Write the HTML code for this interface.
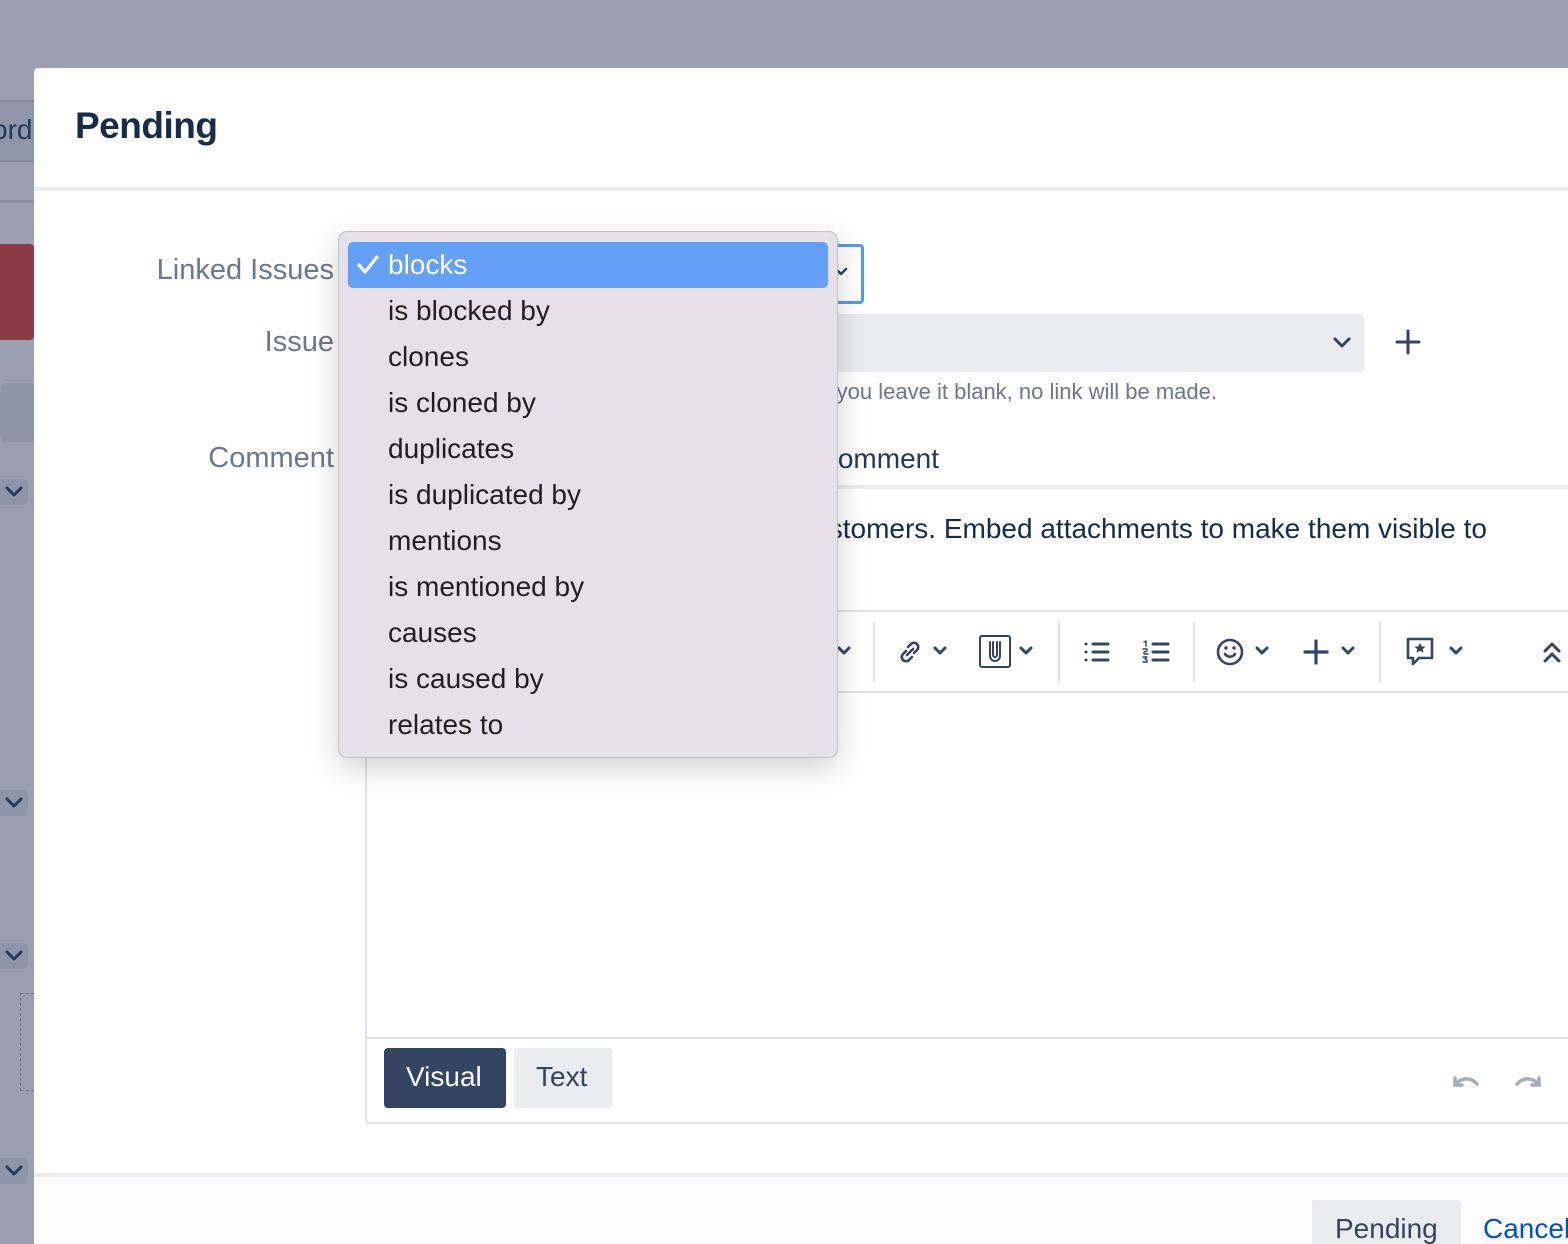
<!DOCTYPE html>
<html><head><meta charset="utf-8"><style>
*{margin:0;padding:0;box-sizing:border-box}
html,body{width:1568px;height:1244px;overflow:hidden}
body{background:#9aa0b1;font-family:"Liberation Sans",sans-serif;position:relative}
.a{position:absolute}
.chev{position:absolute;left:0;width:28px;height:26px;background:#8e95a8;border-radius:0 6px 6px 0}
.t{position:absolute;white-space:nowrap}
.lbl{color:#6b778c;font-size:29px;text-align:right;width:320px;left:14px}
.mi{position:absolute;left:388px;font-size:28px;color:#1f1f1f;white-space:nowrap}
.ic{position:absolute;stroke:#344563;fill:none;stroke-width:2.6;stroke-linecap:round;stroke-linejoin:round}
.sep{position:absolute;top:622px;width:2px;height:60px;background:#dfe1e6}
.cv{position:absolute;left:4px;stroke:#253858;fill:none;stroke-width:3;stroke-linecap:round;stroke-linejoin:round}
</style></head><body>
<div class="a" style="left:0;top:100px;width:34px;height:62px;background:#8f96a9;border-top:2px solid #868da0;border-bottom:2px solid #868da0"></div>
<div class="t" style="left:-8px;top:114px;font-size:28px;color:#253858">ord</div>
<div class="a" style="left:0;top:200px;width:34px;height:3px;background:#8a91a4"></div>
<div class="a" style="left:0;top:244px;width:34px;height:96px;background:#8b3a45;border-radius:0 4px 4px 0"></div>
<div class="a" style="left:0;top:383px;width:34px;height:59px;background:#8e95a8;border-radius:6px 0 0 6px"></div>
<div class="chev" style="top:479px"></div><svg class="cv" style="top:484px" width="20" height="16"><path d="M3 4l7 7 7-7"/></svg>
<div class="chev" style="top:790px"></div><svg class="cv" style="top:795px" width="20" height="16"><path d="M3 4l7 7 7-7"/></svg>
<div class="chev" style="top:943px"></div><svg class="cv" style="top:948px" width="20" height="16"><path d="M3 4l7 7 7-7"/></svg>
<div class="a" style="left:20px;top:993px;width:20px;height:98px;border:1px dashed #6f768a"></div>
<div class="chev" style="top:1158px"></div><svg class="cv" style="top:1163px" width="20" height="16"><path d="M3 4l7 7 7-7"/></svg>

<div class="a" style="left:34px;top:68px;width:1540px;height:1176px;background:#fff;border-radius:4px 0 0 0"></div>
<div class="t" style="left:75px;top:105px;font-size:37px;color:#172b4d;font-weight:bold;letter-spacing:-0.5px">Pending</div>
<div class="a" style="left:34px;top:187px;width:1534px;height:4px;background:#ebecf0"></div>

<div class="t lbl" style="top:254px">Linked Issues</div>
<div class="t lbl" style="top:326px">Issue</div>
<div class="t lbl" style="top:442px">Comment</div>

<div class="a" style="left:780px;top:244px;width:84px;height:60px;border:3px solid #4c9aff;border-radius:4px"></div>
<svg class="ic" style="left:834px;top:266px" width="14" height="12"><path d="M2 3l5 5 5-5"/></svg>
<div class="a" style="left:780px;top:314px;width:584px;height:58px;background:#ebecf0;border-radius:4px"></div>
<svg class="ic" style="left:1332px;top:334px;stroke-width:3" width="20" height="18"><path d="M3 5l7 7 7-7"/></svg>
<svg class="ic" style="left:1394px;top:328px;stroke-width:3" width="28" height="28"><path d="M14 3v22M3 14h22"/></svg>
<div class="t" style="right:351px;top:379px;font-size:22px;color:#6b778c">If you leave it blank, no link will be made.</div>

<div class="t" style="right:629px;top:443px;font-size:28px;color:#253858">Comment</div>
<div class="a" style="left:780px;top:485px;width:788px;height:4px;background:#ebecf0"></div>
<div class="t" style="right:81px;top:513px;font-size:28px;color:#172b4d">Visible to customers. Embed attachments to make them visible to</div>

<div class="a" style="left:365px;top:610px;width:1210px;height:514px;border:2px solid #dfe1e6;border-radius:4px"></div>
<div class="a" style="left:365px;top:691px;width:1210px;height:2px;background:#dfe1e6"></div>
<div class="a" style="left:365px;top:1037px;width:1210px;height:2px;background:#dfe1e6"></div>
<div class="sep" style="left:873px"></div><div class="sep" style="left:1058px"></div><div class="sep" style="left:1193px"></div><div class="sep" style="left:1379px"></div>
<svg class="ic" style="left:836px;top:644px;stroke-width:3" width="16" height="14"><path d="M3 4l5 5 5-5"/></svg>
<svg class="ic" style="left:894px;top:636px" width="32" height="32"><path d="M14 11l3-3a4 4 0 016 6l-3 3M18 21l-3 3a4 4 0 01-6-6l3-3M13 19l6-6"/></svg>
<svg class="ic" style="left:932px;top:644px;stroke-width:3" width="16" height="14"><path d="M3 4l5 5 5-5"/></svg>
<svg class="ic" style="left:978px;top:634px;stroke-width:2" width="36" height="36"><rect x="2" y="2" width="30" height="31" rx="2"/><path d="M12 8v14a5 5 0 0010 0V8M15 8v13a2 2 0 004 0V8"/></svg>
<svg class="ic" style="left:1018px;top:644px;stroke-width:3" width="16" height="14"><path d="M3 4l5 5 5-5"/></svg>
<svg class="ic" style="left:1082px;top:640px;stroke-width:3" width="30" height="26"><path d="M4 4h0M4 12h0M4 20h0M11 4h15M11 12h15M11 20h15"/></svg>
<svg class="ic" style="left:1142px;top:640px;stroke-width:3" width="30" height="26"><path d="M11 4h15M11 12h15M11 20h15"/><path d="M2 2l2-1v5M1 9h4v2l-3 1v2h4M1 17h4l-2 2 2 1v2H1" stroke-width="1.4"/></svg>
<svg class="ic" style="left:1214px;top:636px" width="32" height="32"><circle cx="16" cy="16" r="12"/><path d="M11 18a6 6 0 0010 0"/><path d="M12 12h0M20 12h0" stroke-width="3.5"/></svg>
<svg class="ic" style="left:1254px;top:644px;stroke-width:3" width="16" height="14"><path d="M3 4l5 5 5-5"/></svg>
<svg class="ic" style="left:1302px;top:638px;stroke-width:3.2" width="28" height="28"><path d="M14 3v22M3 14h22"/></svg>
<svg class="ic" style="left:1340px;top:644px;stroke-width:3" width="16" height="14"><path d="M3 4l5 5 5-5"/></svg>
<svg class="ic" style="left:1404px;top:636px" width="32" height="34"><path d="M4 3h24v19H15l-6 6v-6H4z"/><path d="M16 8l1.5 3h3l-2.5 2 1 3-3-2-3 2 1-3-2.5-2h3z" fill="#344563" stroke-width="1"/></svg>
<svg class="ic" style="left:1448px;top:644px;stroke-width:3" width="16" height="14"><path d="M3 4l5 5 5-5"/></svg>
<svg class="ic" style="left:1542px;top:640px;stroke-width:3" width="20" height="26"><path d="M3 11l7-7 7 7M3 21l7-7 7 7"/></svg>

<div class="a" style="left:384px;top:1048px;width:122px;height:60px;background:#344563;border-radius:4px"></div>
<div class="t" style="left:406px;top:1061px;font-size:28px;color:#fff">Visual</div>
<div class="a" style="left:514px;top:1048px;width:98px;height:60px;background:#ebecf0;border-radius:4px"></div>
<div class="t" style="left:536px;top:1061px;font-size:28px;color:#344563">Text</div>
<svg class="ic" style="left:1450px;top:1070px;stroke:#a5adba;stroke-width:3.5" width="34" height="20"><path d="M5 8v7h7"/><path d="M5 15c6-8 16-8 22-1"/></svg>
<svg class="ic" style="left:1510px;top:1070px;stroke:#a5adba;stroke-width:3.5" width="34" height="20"><path d="M29 8v7h-7"/><path d="M29 15c-6-8-16-8-22-1"/></svg>

<div class="a" style="left:34px;top:1173px;width:1534px;height:4px;background:#ebecf0"></div>
<div class="a" style="left:34px;top:1177px;width:1534px;height:67px;background:#fcfcfc"></div>
<div class="a" style="left:1312px;top:1200px;width:149px;height:60px;background:#ebecf0;border-radius:4px"></div>
<div class="t" style="left:1335px;top:1213px;font-size:28px;color:#344563">Pending</div>
<div class="t" style="left:1483px;top:1213px;font-size:28px;color:#0052cc">Cancel</div>

<div class="a" style="left:338px;top:231px;width:500px;height:527px;background:#e4e2e8;border:1px solid #c4c2c8;border-radius:9px;box-shadow:0 10px 30px rgba(0,0,0,0.18)"></div>
<div class="a" style="left:348px;top:242px;width:480px;height:46px;background:#64a0f7;border-radius:5px"></div>
<svg class="a" style="left:356px;top:254px" width="24" height="22"><path d="M3 11l6 7L21 3" stroke="#fff" stroke-width="3.2" fill="none" stroke-linecap="round" stroke-linejoin="round"/></svg>
<div class="mi" style="top:249px;color:#fff">blocks</div>
<div class="mi" style="top:295px">is blocked by</div>
<div class="mi" style="top:341px">clones</div>
<div class="mi" style="top:387px">is cloned by</div>
<div class="mi" style="top:433px">duplicates</div>
<div class="mi" style="top:479px">is duplicated by</div>
<div class="mi" style="top:525px">mentions</div>
<div class="mi" style="top:571px">is mentioned by</div>
<div class="mi" style="top:617px">causes</div>
<div class="mi" style="top:663px">is caused by</div>
<div class="mi" style="top:709px">relates to</div>
</body></html>
